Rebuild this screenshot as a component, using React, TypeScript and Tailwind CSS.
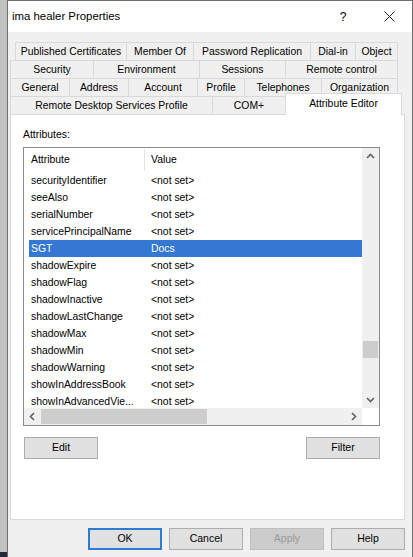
import React from 'react';

// Property dialog tabs, widths taken from the screenshot
const tabRows: { label: string; w: number }[][] = [
  [
    { label: 'Published Certificates', w: 111 },
    { label: 'Member Of', w: 67 },
    { label: 'Password Replication', w: 117 },
    { label: 'Dial-in', w: 45 },
    { label: 'Object', w: 43 },
  ],
  [
    { label: 'Security', w: 83 },
    { label: 'Environment', w: 106 },
    { label: 'Sessions', w: 86 },
    { label: 'Remote control', w: 113 },
  ],
  [
    { label: 'General', w: 59 },
    { label: 'Address', w: 59 },
    { label: 'Account', w: 69 },
    { label: 'Profile', w: 47 },
    { label: 'Telephones', w: 77 },
    { label: 'Organization', w: 77 },
  ],
];

const attributes: [string, string][] = [
  ['securityIdentifier', '<not set>'],
  ['seeAlso', '<not set>'],
  ['serialNumber', '<not set>'],
  ['servicePrincipalName', '<not set>'],
  ['SGT', 'Docs'],
  ['shadowExpire', '<not set>'],
  ['shadowFlag', '<not set>'],
  ['shadowInactive', '<not set>'],
  ['shadowLastChange', '<not set>'],
  ['shadowMax', '<not set>'],
  ['shadowMin', '<not set>'],
  ['shadowWarning', '<not set>'],
  ['showInAddressBook', '<not set>'],
  ['showInAdvancedVie...', '<not set>'],
];

function Chevron({ dir }: { dir: 'up' | 'down' | 'left' | 'right' }) {
  const pts = {
    up: '1,6 4.5,2.5 8,6',
    down: '1,3 4.5,6.5 8,3',
    left: '6,1 2.5,4.5 6,8',
    right: '3,1 6.5,4.5 3,8',
  }[dir];
  return (
    <svg width="9" height="9" viewBox="0 0 9 9">
      <polyline points={pts} fill="none" stroke="#606060" strokeWidth="1.6" />
    </svg>
  );
}

function Btn({ label, variant }: { label: string; variant?: 'default' | 'disabled' }) {
  const cls =
    variant === 'default'
      ? 'border-2 border-[#2f7bd4] bg-[#e1e1e1] text-black'
      : variant === 'disabled'
        ? 'border border-[#bfbfbf] bg-[#cccccc] text-[#9a9a9a]'
        : 'border border-[#adadad] bg-[#e1e1e1] text-black';
  return (
    <div className={`w-[74px] h-[22px] flex items-center justify-center text-[10.5px] ${cls}`}>
      {label}
    </div>
  );
}

export default function App() {
  return (
    <div className="w-[413px] h-[557px] flex overflow-hidden font-['Liberation_Sans',Arial,sans-serif] text-black">
      {/* desktop strip behind window */}
      <div className="w-[7px] flex flex-col bg-[#c2c2c2]">
        <div className="flex-1" />
        <div className="h-[5px] bg-[#1f2b3a]" />
      </div>

      {/* window */}
      <div className="flex-1 flex flex-col border-l border-r border-t border-[#6f6f6f] bg-[#f0f0f0]">
        {/* title bar */}
        <div className="h-[31px] flex items-center bg-white">
          <div className="pl-[4px] flex-1 text-[11.4px]">ima healer Properties</div>
          <div className="w-[46px] h-full flex items-center justify-center text-[12px]">?</div>
          <div className="w-[46px] h-full flex items-center justify-center">
            <svg width="11" height="11" viewBox="0 0 11 11">
              <path d="M0.5 0.5 L10.5 10.5 M10.5 0.5 L0.5 10.5" stroke="#222" strokeWidth="1" />
            </svg>
          </div>
        </div>

        <div className="pl-[2px] pt-[10px]">
          {/* tab rows */}
          {tabRows.map((row, i) => (
            <div key={i} className={`flex h-[18px] ${i === 0 ? 'pl-[5px]' : ''}`}>
              {row.map((t, j) => (
                <div
                  key={t.label}
                  style={{ width: t.w }}
                  className={`flex items-center justify-center border-t border-l border-[#d9d9d9] text-[10.4px] ${
                    j === row.length - 1 ? 'border-r' : ''
                  }`}
                >
                  {t.label}
                </div>
              ))}
            </div>
          ))}
          <div className="flex h-[18px]">
            <div className="w-[202px] flex items-center justify-center border-t border-l border-[#d9d9d9] text-[10.4px]">
              Remote Desktop Services Profile
            </div>
            <div className="w-[73px] flex items-center justify-center border-t border-l border-[#d9d9d9] text-[10.4px]">
              COM+
            </div>
            <div className="relative z-10 w-[117px] h-[22px] -mt-[3px] flex justify-center pt-[2px] border-t border-l border-r border-[#d9d9d9] bg-white text-[10.4px]">
              Attribute Editor
            </div>
          </div>

          {/* tab panel */}
          <div className="w-[395px] h-[406px] border border-[#d9d9d9] bg-white pl-[12px] pt-[13px]">
            <div className="text-[10.4px] leading-[13px]">Attributes:</div>

            {/* list view */}
            <div className="mt-[6px] w-[357px] h-[279px] border border-[#8a8a8a] flex flex-col">
              <div className="h-[260px] flex">
                <div className="flex-1 overflow-hidden pl-[5px] text-[10.4px]">
                  <div className="h-[24px] flex items-center">
                    <div className="w-[116px] h-[22px] flex items-center pl-[2px] border-r border-[#e5e5e5]">
                      Attribute
                    </div>
                    <div className="pl-[6px]">Value</div>
                  </div>
                  {attributes.map(([name, value]) => {
                    const sel = name === 'SGT';
                    return (
                      <div
                        key={name}
                        className={`h-[17px] flex items-center pl-[2px] ${sel ? 'bg-[#3478d4] text-white' : ''}`}
                      >
                        <div className="w-[120px] whitespace-nowrap">{name}</div>
                        <div className="whitespace-nowrap">{value}</div>
                      </div>
                    );
                  })}
                </div>
                {/* vertical scrollbar */}
                <div className="w-[17px] flex flex-col bg-[#f0f0f0]">
                  <div className="h-[17px] flex items-center justify-center">
                    <Chevron dir="up" />
                  </div>
                  <div className="flex-1 flex flex-col px-[1px]">
                    <div className="h-[176px]" />
                    <div className="h-[17px] bg-[#cdcdcd]" />
                  </div>
                  <div className="h-[17px] flex items-center justify-center">
                    <Chevron dir="down" />
                  </div>
                </div>
              </div>
              {/* horizontal scrollbar */}
              <div className="h-[17px] flex">
                <div className="flex-1 flex bg-[#f0f0f0]">
                  <div className="w-[17px] flex items-center justify-center">
                    <Chevron dir="left" />
                  </div>
                  <div className="flex-1 py-[1px]">
                    <div className="w-[166px] h-full bg-[#cdcdcd]" />
                  </div>
                  <div className="w-[17px] flex items-center justify-center">
                    <Chevron dir="right" />
                  </div>
                </div>
                <div className="w-[17px] bg-white" />
              </div>
            </div>

            <div className="mt-[11px] w-[357px] pl-[1px] flex justify-between">
              <Btn label="Edit" />
              <Btn label="Filter" />
            </div>
          </div>

          {/* dialog buttons */}
          <div className="mt-[8px] w-[395px] flex justify-end gap-[7px]">
            <Btn label="OK" variant="default" />
            <Btn label="Cancel" />
            <Btn label="Apply" variant="disabled" />
            <Btn label="Help" />
          </div>
        </div>
      </div>
    </div>
  );
}
